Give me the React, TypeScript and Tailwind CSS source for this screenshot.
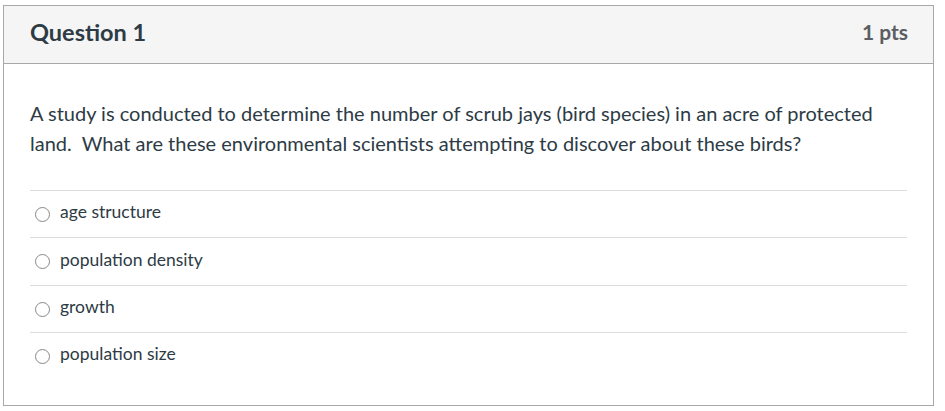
export default function App() {
  const answers = [
    { text: "age structure", h: "h-[47px]" },
    { text: "population density", h: "h-[48px]" },
    { text: "growth", h: "h-[47px]" },
    { text: "population size", h: "h-[47px]" },
  ];
  return (
    <div className="min-h-screen bg-white pt-[5px] pl-[3px]" style={{ fontFamily: "Lato, 'Open Sans', sans-serif" }}>
      <div className="w-[931px] h-[401px] border border-[#a8a8a8] bg-white">
        <div className="h-[58px] bg-[#f5f5f5] border-b border-[#a8a8a8] flex items-center justify-between pl-[26px] pr-[25px]">
          <h2 className="text-[23.5px] font-bold text-[#2d3b45] -mt-[4px]">Question 1</h2>
          <div className="text-[21px] font-bold text-[#5b5e62] -mt-[6px]">1 pts</div>
        </div>
        <div className="px-[26px] pt-[34px]">
          <p className="text-[20px] leading-[30px] text-[#2d3b45] pr-[8px]">
            A study is conducted to determine the number of scrub jays (bird species) in an acre of protected land.&nbsp; What are these environmental scientists attempting to discover about these birds?
          </p>
          <div className="mt-[32px]">
            {answers.map((a) => (
              <div key={a.text} className={`${a.h} border-t border-[#dddddd] flex items-center`}>
                <span className="ml-[5px] w-[15px] h-[15px] rounded-full border border-[#888888] bg-white" />
                <span className="ml-[10px] text-[17.5px] text-[#2d3b45] -mt-[3px]">{a.text}</span>
              </div>
            ))}
          </div>
        </div>
      </div>
    </div>
  );
}
